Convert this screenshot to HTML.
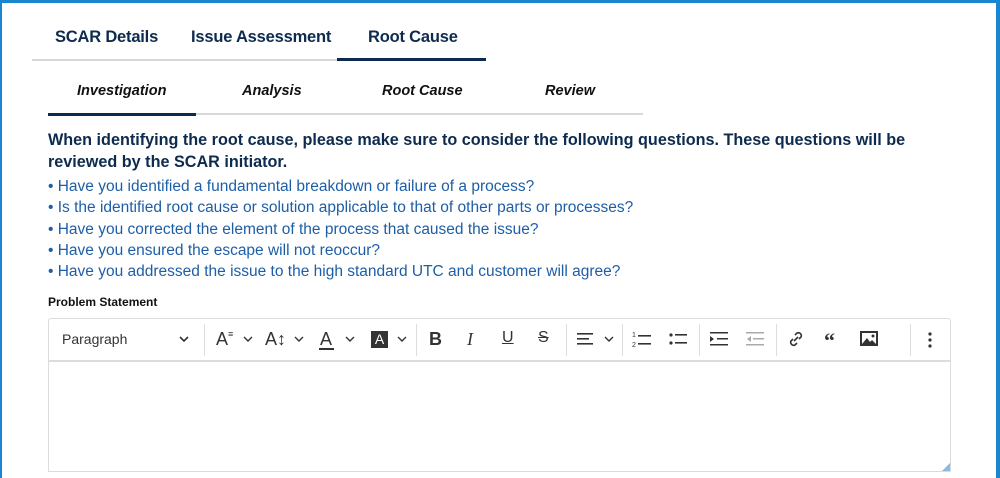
<!DOCTYPE html>
<html><head><style>
*{margin:0;padding:0;box-sizing:border-box}
body{width:1000px;height:478px;background:#fff;font-family:"Liberation Sans",sans-serif;position:relative;overflow:hidden}
.frame{position:absolute;left:0;top:0;width:1000px;height:478px;border-top:3px solid #1a86cf;border-left:2px solid #1a86cf;border-right:4px solid #1a86cf}
.t{position:absolute;font-weight:bold;color:#0d2b4e;font-size:16.5px;letter-spacing:-0.2px}
.s{position:absolute;font-weight:bold;font-style:italic;color:#111;font-size:14.5px}
.line{position:absolute}
.h{position:absolute;left:48px;top:129px;width:900px;font-size:16.2px;font-weight:bold;color:#0d2b4e;line-height:22px}
.b{position:absolute;left:48px;top:176px;font-size:15.5px;color:#1e5ea6;line-height:21.3px}
.lbl{position:absolute;left:48px;top:295px;font-size:12px;font-weight:bold;color:#111}
.tb{position:absolute;left:48px;top:318px;width:903px;height:43px;border:1px solid #dcdcdc;border-radius:3px 3px 0 0}
.ed{position:absolute;left:48px;top:361px;width:903px;height:111px;border:1px solid #dcdcdc}
.i{position:absolute;top:329px;font-size:18px;color:#333}
.sep{position:absolute;top:324px;width:1px;height:32px;background:#ddd}
.cv{position:absolute;top:336px}
</style></head><body>
<div class="frame"></div>
<div class="t" style="left:55px;top:28px">SCAR Details</div>
<div class="t" style="left:191px;top:28px">Issue Assessment</div>
<div class="t" style="left:368px;top:28px">Root Cause</div>
<div class="line" style="left:32px;top:59px;width:454px;height:2px;background:#d9d9d9"></div>
<div class="line" style="left:337px;top:58px;width:149px;height:3px;background:#0d2b4e"></div>
<div class="s" style="left:77px;top:83px">Investigation</div>
<div class="s" style="left:242px;top:83px">Analysis</div>
<div class="s" style="left:382px;top:83px">Root Cause</div>
<div class="s" style="left:545px;top:83px">Review</div>
<div class="line" style="left:48px;top:113px;width:595px;height:2px;background:#d9d9d9"></div>
<div class="line" style="left:48px;top:113px;width:148px;height:3px;background:#0d2b4e"></div>
<div class="h">When identifying the root cause, please make sure to consider the following questions. These questions will be reviewed by the SCAR initiator.</div>
<div class="b">• Have you identified a fundamental breakdown or failure of a process?<br>• Is the identified root cause or solution applicable to that of other parts or processes?<br>• Have you corrected the element of the process that caused the issue?<br>• Have you ensured the escape will not reoccur?<br>• Have you addressed the issue to the high standard UTC and customer will agree?</div>
<div class="lbl">Problem Statement</div>
<div class="tb"></div>
<div class="ed"></div>
<svg style="position:absolute;left:942px;top:463px" width="8" height="8"><path d="M8 0L8 8L0 8Z" fill="#8fb8e0"/></svg>
<div class="i" style="left:62px;top:331px;font-size:14px">Paragraph</div>
<svg class="cv" style="left:179px" width="10" height="7"><path d="M1 1L5 5L9 1" fill="none" stroke="#333" stroke-width="1.6"/></svg>
<div class="sep" style="left:204px"></div>
<div class="i" style="left:216px">A<span style="font-size:9px;vertical-align:top">≡</span></div>
<svg class="cv" style="left:243px" width="10" height="7"><path d="M1 1L5 5L9 1" fill="none" stroke="#333" stroke-width="1.4"/></svg>
<div class="i" style="left:265px">A↕</div>
<svg class="cv" style="left:294px" width="10" height="7"><path d="M1 1L5 5L9 1" fill="none" stroke="#333" stroke-width="1.4"/></svg>
<div class="i" style="left:320px">A</div>
<div class="line" style="left:319px;top:348px;width:15px;height:1.5px;background:#333"></div>
<svg class="cv" style="left:345px" width="10" height="7"><path d="M1 1L5 5L9 1" fill="none" stroke="#333" stroke-width="1.4"/></svg>
<div style="position:absolute;left:371px;top:331px;width:17px;height:17px;background:#333;color:#fff;font-size:14px;text-align:center;line-height:17px">A</div>
<svg class="cv" style="left:397px" width="10" height="7"><path d="M1 1L5 5L9 1" fill="none" stroke="#333" stroke-width="1.4"/></svg>
<div class="sep" style="left:416px"></div>
<div class="i" style="left:429px;font-weight:bold">B</div>
<div class="i" style="left:467px;font-style:italic;font-family:'Liberation Serif',serif">I</div>
<div class="i" style="left:502px;font-size:16px"><u>U</u></div>
<div class="i" style="left:538px;font-size:16px"><s>S</s></div>
<div class="sep" style="left:566px"></div>
<svg style="position:absolute;left:577px;top:332px" width="16" height="14"><rect x="0" y="1" width="16" height="1.6" fill="#333"/><rect x="0" y="6" width="12" height="1.6" fill="#333"/><rect x="0" y="11" width="16" height="1.6" fill="#333"/></svg>
<svg class="cv" style="left:604px" width="10" height="7"><path d="M1 1L5 5L9 1" fill="none" stroke="#333" stroke-width="1.4"/></svg>
<div class="sep" style="left:622px"></div>
<svg style="position:absolute;left:632px;top:330px" width="20" height="18"><text x="0" y="7" font-size="7" fill="#333">1</text><text x="0" y="17" font-size="7" fill="#333">2</text><rect x="6" y="5" width="13" height="1.6" fill="#333"/><rect x="6" y="13" width="13" height="1.6" fill="#333"/></svg>
<svg style="position:absolute;left:668px;top:330px" width="20" height="18"><circle cx="3" cy="5" r="1.6" fill="#333"/><circle cx="3" cy="13" r="1.6" fill="#333"/><rect x="7" y="4" width="12" height="1.6" fill="#333"/><rect x="7" y="12" width="12" height="1.6" fill="#333"/></svg>
<div class="sep" style="left:699px"></div>
<svg style="position:absolute;left:709px;top:330px" width="20" height="18"><rect x="1" y="2" width="18" height="1.5" fill="#333"/><rect x="8" y="8" width="11" height="1.5" fill="#333"/><rect x="1" y="14" width="18" height="1.5" fill="#333"/><path d="M1 6L5 9L1 12Z" fill="#333"/></svg>
<svg style="position:absolute;left:745px;top:330px" width="20" height="18"><rect x="1" y="2" width="18" height="1.5" fill="#aaa"/><rect x="8" y="8" width="11" height="1.5" fill="#aaa"/><rect x="1" y="14" width="18" height="1.5" fill="#aaa"/><path d="M6 6L2 9L6 12Z" fill="#aaa"/></svg>
<div class="sep" style="left:776px"></div>
<svg style="position:absolute;left:787px;top:330px" width="18" height="18"><g fill="none" stroke="#333" stroke-width="1.6"><path d="M8 5l2-2a3 3 0 0 1 4 4l-2 2"/><path d="M10 13l-2 2a3 3 0 0 1-4-4l2-2"/><path d="M7 11l4-4"/></g></svg>
<div class="i" style="left:824px;font-weight:bold;font-size:22px;top:328px;font-family:'Liberation Serif',serif">“</div>
<svg style="position:absolute;left:860px;top:331px" width="18" height="16"><rect x="1" y="1" width="16" height="13" fill="none" stroke="#333" stroke-width="2"/><path d="M2 13L7 7L10 11L12 9L16 13Z" fill="#333"/><circle cx="13" cy="5" r="1.5" fill="#333"/></svg>
<div class="sep" style="left:910px"></div>
<svg style="position:absolute;left:927px;top:331px" width="6" height="18"><circle cx="3" cy="3" r="1.6" fill="#333"/><circle cx="3" cy="9" r="1.6" fill="#333"/><circle cx="3" cy="15" r="1.6" fill="#333"/></svg>
</body></html>
